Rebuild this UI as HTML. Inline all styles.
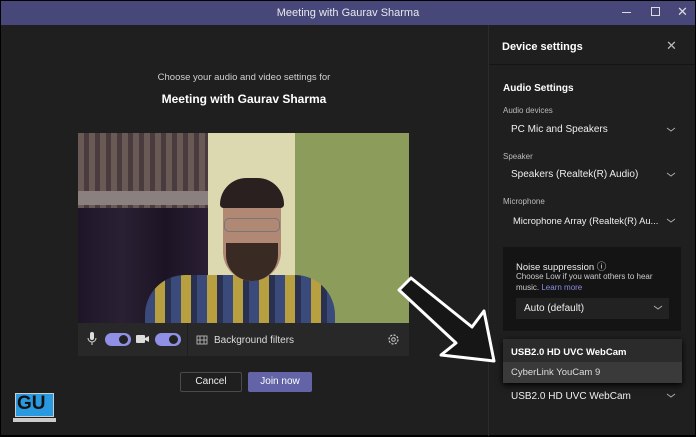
<!DOCTYPE html>
<html><head><style>
*{margin:0;padding:0;box-sizing:border-box}
body{width:696px;height:437px;background:#000;font-family:"Liberation Sans",sans-serif;overflow:hidden;position:relative;color:#fff}
.a{position:absolute}
.t{white-space:nowrap}
</style></head><body>
<div class="a" style="left:1px;top:1px;width:694px;height:434px;background:#1f1f1f"></div>
<div class="a" style="left:1px;top:1px;width:694px;height:24px;background:#474879"></div>
<div class="a t" style="left:0;width:696px;top:7px;text-align:center;font-size:11px;color:#e8e8f0">Meeting with Gaurav Sharma</div>
<div class="a" style="left:622px;top:12px;width:9px;height:1px;background:#ddd"></div>
<div class="a" style="left:651px;top:7px;width:9px;height:9px;border:1px solid #ddd"></div>
<div class="a t" style="left:677px;top:4px;font-size:13px;color:#ddd">✕</div>
<div class="a t" style="left:0;width:488px;top:72px;text-align:center;font-size:9.5px;color:#cfcfcf">Choose your audio and video settings for</div>
<div class="a t" style="left:0;width:488px;top:92px;text-align:center;font-size:12px;font-weight:bold;color:#fff">Meeting with Gaurav Sharma</div>
<div class="a" style="left:78px;top:133px;width:331px;height:190px;overflow:hidden;background:#8a9a58">
 <div class="a" style="left:0;top:0;width:131px;height:190px;background:#2a2030"></div>
 <div class="a" style="left:0;top:0;width:131px;height:75px;background:repeating-linear-gradient(90deg,#6a5a55 0 6px,#4a3c3e 6px 11px)"></div>
 <div class="a" style="left:0;top:58px;width:131px;height:14px;background:#8a8080"></div>
 <div class="a" style="left:0;top:75px;width:131px;height:115px;background:linear-gradient(90deg,#1e1628,#2a2034,#1c1424,#2a1f34)"></div>
 <div class="a" style="left:130px;top:0;width:88px;height:190px;background:#dcd9b0"></div>
 <div class="a" style="left:217px;top:0;width:114px;height:190px;background:#8c9c5a"></div>
 <div class="a" style="left:67px;top:142px;width:190px;height:60px;border-radius:40px 40px 0 0;background:repeating-linear-gradient(90deg,#3a4a7a 0 10px,#b8a040 10px 20px,#2a3050 20px 26px)"></div>
 <div class="a" style="left:145px;top:48px;width:58px;height:100px;border-radius:26px 26px 30px 30px;background:#b08874"></div>
 <div class="a" style="left:142px;top:45px;width:64px;height:30px;border-radius:30px 30px 4px 4px;background:#2a2020"></div>
 <div class="a" style="left:148px;top:110px;width:52px;height:38px;border-radius:0 0 26px 26px;background:#3a2a24"></div>
 <div class="a" style="left:146px;top:85px;width:56px;height:14px;border:1px solid #777;border-radius:5px"></div>
</div>
<div class="a" style="left:78px;top:323px;width:331px;height:33px;background:#292828"></div>
<svg class="a" style="left:86px;top:332px" width="12" height="14"><rect x="4" y="0" width="4" height="8" rx="2" fill="#ddd"/><path d="M2 6a4 4 0 0 0 8 0M6 10v3" stroke="#ddd" fill="none"/></svg>
<div class="a" style="left:105px;top:333px;width:26px;height:13px;border-radius:7px;background:#8f90e6"></div>
<div class="a" style="left:119px;top:335px;width:9px;height:9px;border-radius:5px;background:#222"></div>
<svg class="a" style="left:136px;top:334px" width="14" height="10"><rect x="0" y="1" width="9" height="8" rx="1" fill="#ddd"/><path d="M9 4l4-2v6l-4-2z" fill="#ddd"/></svg>
<div class="a" style="left:155px;top:333px;width:26px;height:13px;border-radius:7px;background:#8f90e6"></div>
<div class="a" style="left:169px;top:335px;width:9px;height:9px;border-radius:5px;background:#222"></div>
<div class="a" style="left:187px;top:323px;width:1px;height:33px;background:#1f1f1f"></div>
<svg class="a" style="left:196px;top:335px" width="12" height="10"><path d="M1 1h10v8H1zM4 1v8M8 1v8M1 5h10" stroke="#aaa" fill="none"/></svg>
<div class="a t" style="left:214px;top:335px;font-size:10px;color:#ddd">Background filters</div>
<svg class="a" style="left:387px;top:333px" width="13" height="13"><circle cx="6.5" cy="6.5" r="4.5" stroke="#ccc" fill="none" stroke-width="1.2" stroke-dasharray="2.2 1.3"/><circle cx="6.5" cy="6.5" r="1.8" stroke="#ccc" fill="none"/></svg>
<div class="a t" style="left:180px;top:372px;width:62px;height:20px;border:1px solid #4a4a4a;border-radius:2px;text-align:center;line-height:18px;font-size:10px;color:#eee">Cancel</div>
<div class="a t" style="left:248px;top:372px;width:64px;height:20px;background:#6264a7;border-radius:2px;text-align:center;line-height:20px;font-size:10px;color:#fff">Join now</div>
<div class="a" style="left:15px;top:393px;width:39px;height:24px;background:#2a9ae0;border:1px solid #ccc"></div>
<div class="a t" style="left:17px;top:393px;font-size:19px;font-weight:bold;color:#111">GU</div>
<div class="a" style="left:13px;top:418px;width:43px;height:4px;background:#ccc"></div>
<div class="a" style="left:488px;top:25px;width:1px;height:411px;background:#2b2b2b"></div>
<div class="a" style="left:489px;top:25px;width:206px;height:40px;border-bottom:1px solid #151515;background:#1f1f1f"></div>
<div class="a t" style="left:502px;top:41px;font-size:11px;font-weight:bold;color:#fff">Device settings</div>
<div class="a t" style="left:666px;top:38px;font-size:13px;color:#bbb">✕</div>
<div class="a t" style="left:503px;top:83px;font-size:10px;font-weight:bold;color:#fff">Audio Settings</div>
<div class="a t" style="left:503px;top:106px;font-size:8px;color:#bbb">Audio devices</div>
<div class="a t" style="left:511px;top:124px;font-size:10px;color:#eee">PC Mic and Speakers</div>
<div class="a t" style="left:503px;top:152px;font-size:8px;color:#bbb">Speaker</div>
<div class="a t" style="left:511px;top:169px;font-size:10px;color:#eee">Speakers (Realtek(R) Audio)</div>
<div class="a t" style="left:503px;top:197px;font-size:8px;color:#bbb">Microphone</div>
<div class="a t" style="left:513px;top:215px;font-size:9.4px;color:#eee">Microphone Array (Realtek(R) Au...</div>
<svg class="a" style="left:0;top:0" width="696" height="437" fill="none" stroke="#aaa" stroke-width="1">
<path d="M667 128l4 3 4-3M667 173l4 3 4-3M667 219l4 3 4-3M654 306l4 3 4-3M667 394l4 3 4-3"/>
</svg>
<div class="a" style="left:503px;top:247px;width:178px;height:84px;background:#141414"></div>
<div class="a t" style="left:516px;top:259px;font-size:9.5px;color:#eee">Noise suppression ⓘ</div>
<div class="a t" style="left:516px;top:272px;font-size:8px;color:#ccc">Choose Low if you want others to hear</div>
<div class="a t" style="left:516px;top:283px;font-size:8px;color:#ccc">music. <span style="color:#8a8ce0">Learn more</span></div>
<div class="a" style="left:516px;top:298px;width:153px;height:21px;background:#222"></div>
<div class="a t" style="left:524px;top:303px;font-size:10px;color:#eee">Auto (default)</div>
<svg class="a" style="left:0;top:0" width="696" height="437" fill="none" stroke="#aaa"><path d="M654 306l4 3 4-3"/></svg>
<div class="a" style="left:503px;top:339px;width:179px;height:44px;background:#2c2b2b;box-shadow:0 2px 6px #000"></div>
<div class="a" style="left:503px;top:362px;width:179px;height:21px;background:#3b3a3a"></div>
<div class="a t" style="left:511px;top:347px;font-size:9.5px;font-weight:bold;color:#fff">USB2.0 HD UVC WebCam</div>
<div class="a t" style="left:511px;top:367px;font-size:9.5px;color:#ddd">CyberLink YouCam 9</div>
<div class="a t" style="left:511px;top:391px;font-size:10px;color:#eee">USB2.0 HD UVC WebCam</div>
<svg class="a" style="left:0;top:0" width="696" height="437">
<polygon points="399,290 411,278 472,327 484,311 494,361 441,355 456,343" fill="#161616" stroke="#fff" stroke-width="3" stroke-linejoin="round"/>
</svg>
</body></html>
